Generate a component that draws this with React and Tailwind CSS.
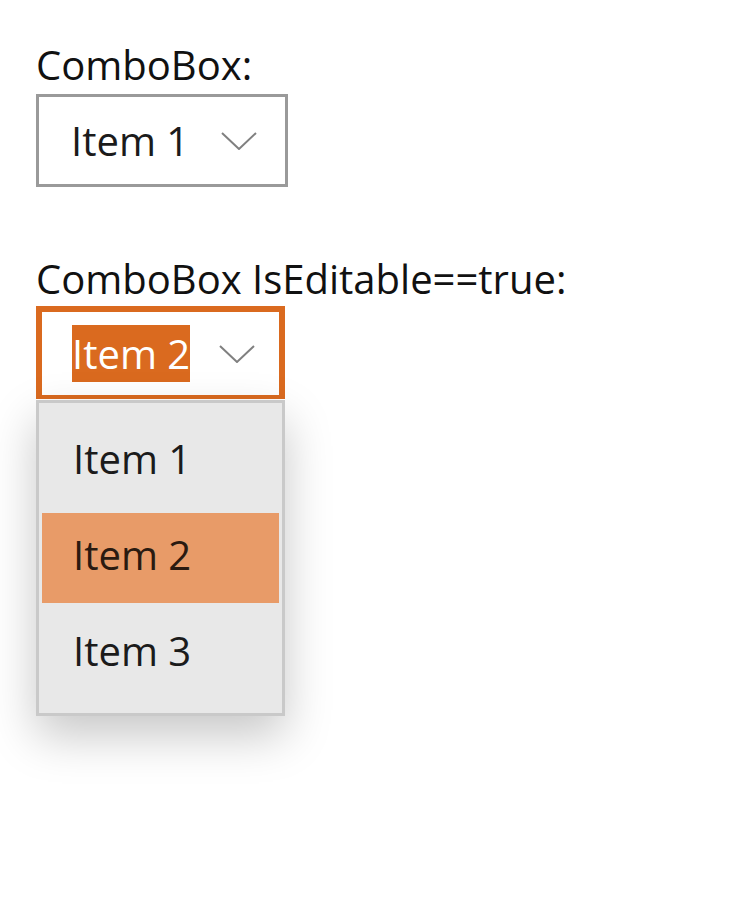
const font = { fontFamily: '"Open Sans", "Noto Sans", sans-serif' };

const Chevron = () => (
  <svg width="36" height="18" viewBox="0 0 36 18" className="shrink-0">
    <polyline
      points="1,1 18,17 35,1"
      fill="none"
      stroke="#808080"
      strokeWidth="2"
    />
  </svg>
);

const items = ["Item 1", "Item 2", "Item 3"];

export default function App() {
  return (
    <div
      className="relative w-[738px] h-[924px] bg-white text-[#111] pl-[36px] pt-[41px]"
      style={font}
    >
      <div className="h-[48px] text-[40px] leading-[48px]">ComboBox:</div>

      <div className="mt-[5px] flex h-[93px] w-[252px] items-center justify-between border-[3px] border-[#9a9a9a] pl-[32px] pr-[28px]">
        <span className="text-[40px] leading-[48px] text-[#1b1b1b]">Item 1</span>
        <Chevron />
      </div>

      <div className="mt-[68px] h-[48px] text-[40px] leading-[48px]">
        ComboBox IsEditable==true:
      </div>

      <div className="relative mt-[3px] w-[249px]">
        <div className="flex h-[93px] w-[249px] items-center justify-between border-[6px] border-b-[4px] border-[#da6a1f] bg-white pl-[30px] pr-[24px]">
          <span className="h-[57px] bg-[#da6a1f] text-[40px] leading-[57px] text-white">
            Item 2
          </span>
          <Chevron />
        </div>

        <div className="absolute left-0 top-[94px] w-[249px] border-[3px] border-[#c9c9c9] bg-[#e8e8e8] py-[11px] shadow-[0_20px_44px_rgba(0,0,0,0.22)]">
          {items.map((item) => (
            <div key={item} className="p-[3px]">
              <div
                className={
                  "flex h-[90px] items-center pl-[31px] pb-[7px] text-[40px] leading-[48px] " +
                  (item === "Item 2"
                    ? "bg-[#e89b68] text-[#2a1a10]"
                    : "text-[#1b1b1b]")
                }
              >
                {item}
              </div>
            </div>
          ))}
        </div>
      </div>
    </div>
  );
}
